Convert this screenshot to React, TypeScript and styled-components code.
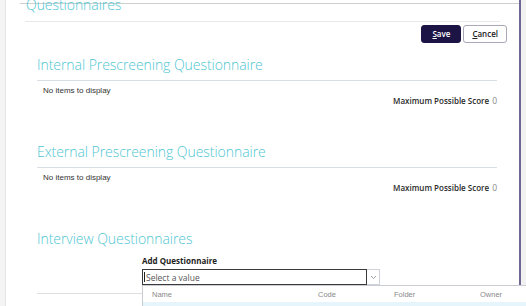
import React from "react";
import styled, { createGlobalStyle } from "styled-components";

const GlobalStyle = createGlobalStyle`
    html, body {
        margin: 0;
        padding: 0;
        background: #ffffff;
        font-family: "Open Sans", "Liberation Sans", sans-serif;
    }
`;

const Page = styled.div`
    display: flex;
    width: 526px;
    height: 306px;
    overflow: hidden;
    background: #ffffff;
`;

const Gutter = styled.div`
    width: 5px;
    flex-shrink: 0;
    background: #f4f4f4;
    border-right: 1px solid #e4e4e4;
`;

const Workspace = styled.div`
    flex: 1;
    min-width: 0;
    padding-left: 14px;
`;

const RightRail = styled.div`
    width: 5px;
    flex-shrink: 0;
    background: #f1f1f1;
    border-left: 2px solid #706894;
`;

const Frame = styled.div`
    margin-top: 3px;
    border-top: 1px solid #cfcfcf;
`;

const PageHeader = styled.div`
    display: flow-root;
    height: 17px;
    margin: 0 19px 0 5px;
    border-bottom: 1px solid #e8e8e8;
`;

const Title = styled.h1<{ $top?: number }>`
    margin: ${p => (p.$top ?? 0)}px 0 0 0;
    font-size: 14px;
    line-height: 18px;
    font-weight: 300;
    letter-spacing: -0.05px;
    color: #4ec6d1;
`;

const Toolbar = styled.div`
    display: flex;
    justify-content: flex-end;
    gap: 2px;
    margin: 3px 12px 0 0;
`;

const Button = styled.button<{ $primary?: boolean }>`
    height: 18px;
    padding: 0 ${p => (p.$primary ? 10 : 8)}px;
    border-radius: 3px;
    border: 1px solid ${p => (p.$primary ? "#1d1446" : "#a9a8b8")};
    background: ${p => (p.$primary ? "#1d1446" : "#ffffff")};
    color: ${p => (p.$primary ? "#ffffff" : "#222222")};
    font-family: "Open Sans", sans-serif;
    font-size: 8px;
    font-weight: 600;
    line-height: 16px;
    cursor: pointer;
`;

const Content = styled.div`
    padding: 0 22px 0 17px;
`;

const Section = styled.section<{ $first?: boolean }>`
    margin-top: ${p => (p.$first ? 13 : 37)}px;
`;

const SectionHead = styled.div`
    padding-bottom: 6px;
    border-bottom: 1px solid #d8dde6;
`;

const Empty = styled.div`
    margin: 5px 0 0 6px;
    font-family: "Liberation Sans", Arial, sans-serif;
    font-size: 8px;
    line-height: 10px;
    color: #333333;
`;

const Score = styled.div`
    text-align: right;
    font-size: 8px;
    line-height: 10px;
    font-weight: 600;
    color: #2a2a2a;
    span {
        font-weight: 400;
        font-size: 8.5px;
        color: #888888;
        margin-left: 3px;
    }
`;

const Field = styled.div`
    position: relative;
    margin: 8px 0 0 105px;
    width: 238px;
`;

const Label = styled.div`
    font-size: 8px;
    line-height: 10px;
    font-weight: 700;
    color: #222222;
`;

const SelectRow = styled.div`
    display: flex;
    margin-top: 3px;
    height: 16px;
`;

const SelectBox = styled.div`
    flex: 0 0 225px;
    box-sizing: border-box;
    border: 1px solid #3a3a3a;
    display: flex;
    align-items: center;
    padding-left: 1px;
    font-size: 8.5px;
    color: #555555;
`;

const Caret = styled.span`
    width: 1px;
    height: 10px;
    background: #222222;
    margin-right: 1px;
`;

const Toggle = styled.div`
    flex: 0 0 13px;
    box-sizing: border-box;
    border: 1px solid #cfd3d9;
    border-left: none;
    display: flex;
    align-items: center;
    justify-content: center;
`;

const Divider = styled.div`
    margin-top: 8px;
    border-top: 1px solid #dedede;
`;

const Dropdown = styled.div`
    position: absolute;
    z-index: 2;
    left: 0;
    top: 100%;
    width: 400px;
    background: #ffffff;
    border-top: 1px solid #c9ccd2;
    border-left: 1px solid #c9ccd2;
`;

const DropHeader = styled.div`
    display: grid;
    grid-template-columns: 166px 76px 86px 1fr;
    padding-left: 9px;
    height: 16px;
    align-items: center;
    font-family: "Liberation Sans", Arial, sans-serif;
    font-size: 7.5px;
    color: #8a8a8a;
`;

const DropRow = styled.div`
    height: 16px;
    background: #e6f5fb;
`;

const Chevron = () => (
    <svg width="7" height="5" viewBox="0 0 7 5">
        <polyline points="1,1 3.5,3.5 6,1" fill="none" stroke="#9aa0a8" strokeWidth="1" />
    </svg>
);

const App = (): JSX.Element => {
    return (
        <Page>
            <GlobalStyle />
            <Gutter />
            <Workspace>
                <Frame>
                    <PageHeader>
                        <Title $top={-8} style={{ paddingLeft: 1 }}>Questionnaires</Title>
                    </PageHeader>
                    <Toolbar>
                        <Button $primary><u>S</u>ave</Button>
                        <Button><u>C</u>ancel</Button>
                    </Toolbar>
                    <Content>
                        <Section $first>
                            <SectionHead>
                                <Title>Internal Prescreening Questionnaire</Title>
                            </SectionHead>
                            <Empty>No items to display</Empty>
                            <Score>Maximum Possible Score<span>0</span></Score>
                        </Section>
                        <Section>
                            <SectionHead>
                                <Title>External Prescreening Questionnaire</Title>
                            </SectionHead>
                            <Empty>No items to display</Empty>
                            <Score>Maximum Possible Score<span>0</span></Score>
                        </Section>
                        <Section>
                            <Title>Interview Questionnaires</Title>
                            <Field>
                                <Label>Add Questionnaire</Label>
                                <SelectRow>
                                    <SelectBox><Caret />Select a value</SelectBox>
                                    <Toggle><Chevron /></Toggle>
                                </SelectRow>
                                <Dropdown>
                                    <DropHeader>
                                        <span>Name</span>
                                        <span>Code</span>
                                        <span>Folder</span>
                                        <span>Owner</span>
                                    </DropHeader>
                                    <DropRow />
                                </Dropdown>
                            </Field>
                            <Divider />
                        </Section>
                    </Content>
                </Frame>
            </Workspace>
            <RightRail />
        </Page>
    );
};

export default App;
